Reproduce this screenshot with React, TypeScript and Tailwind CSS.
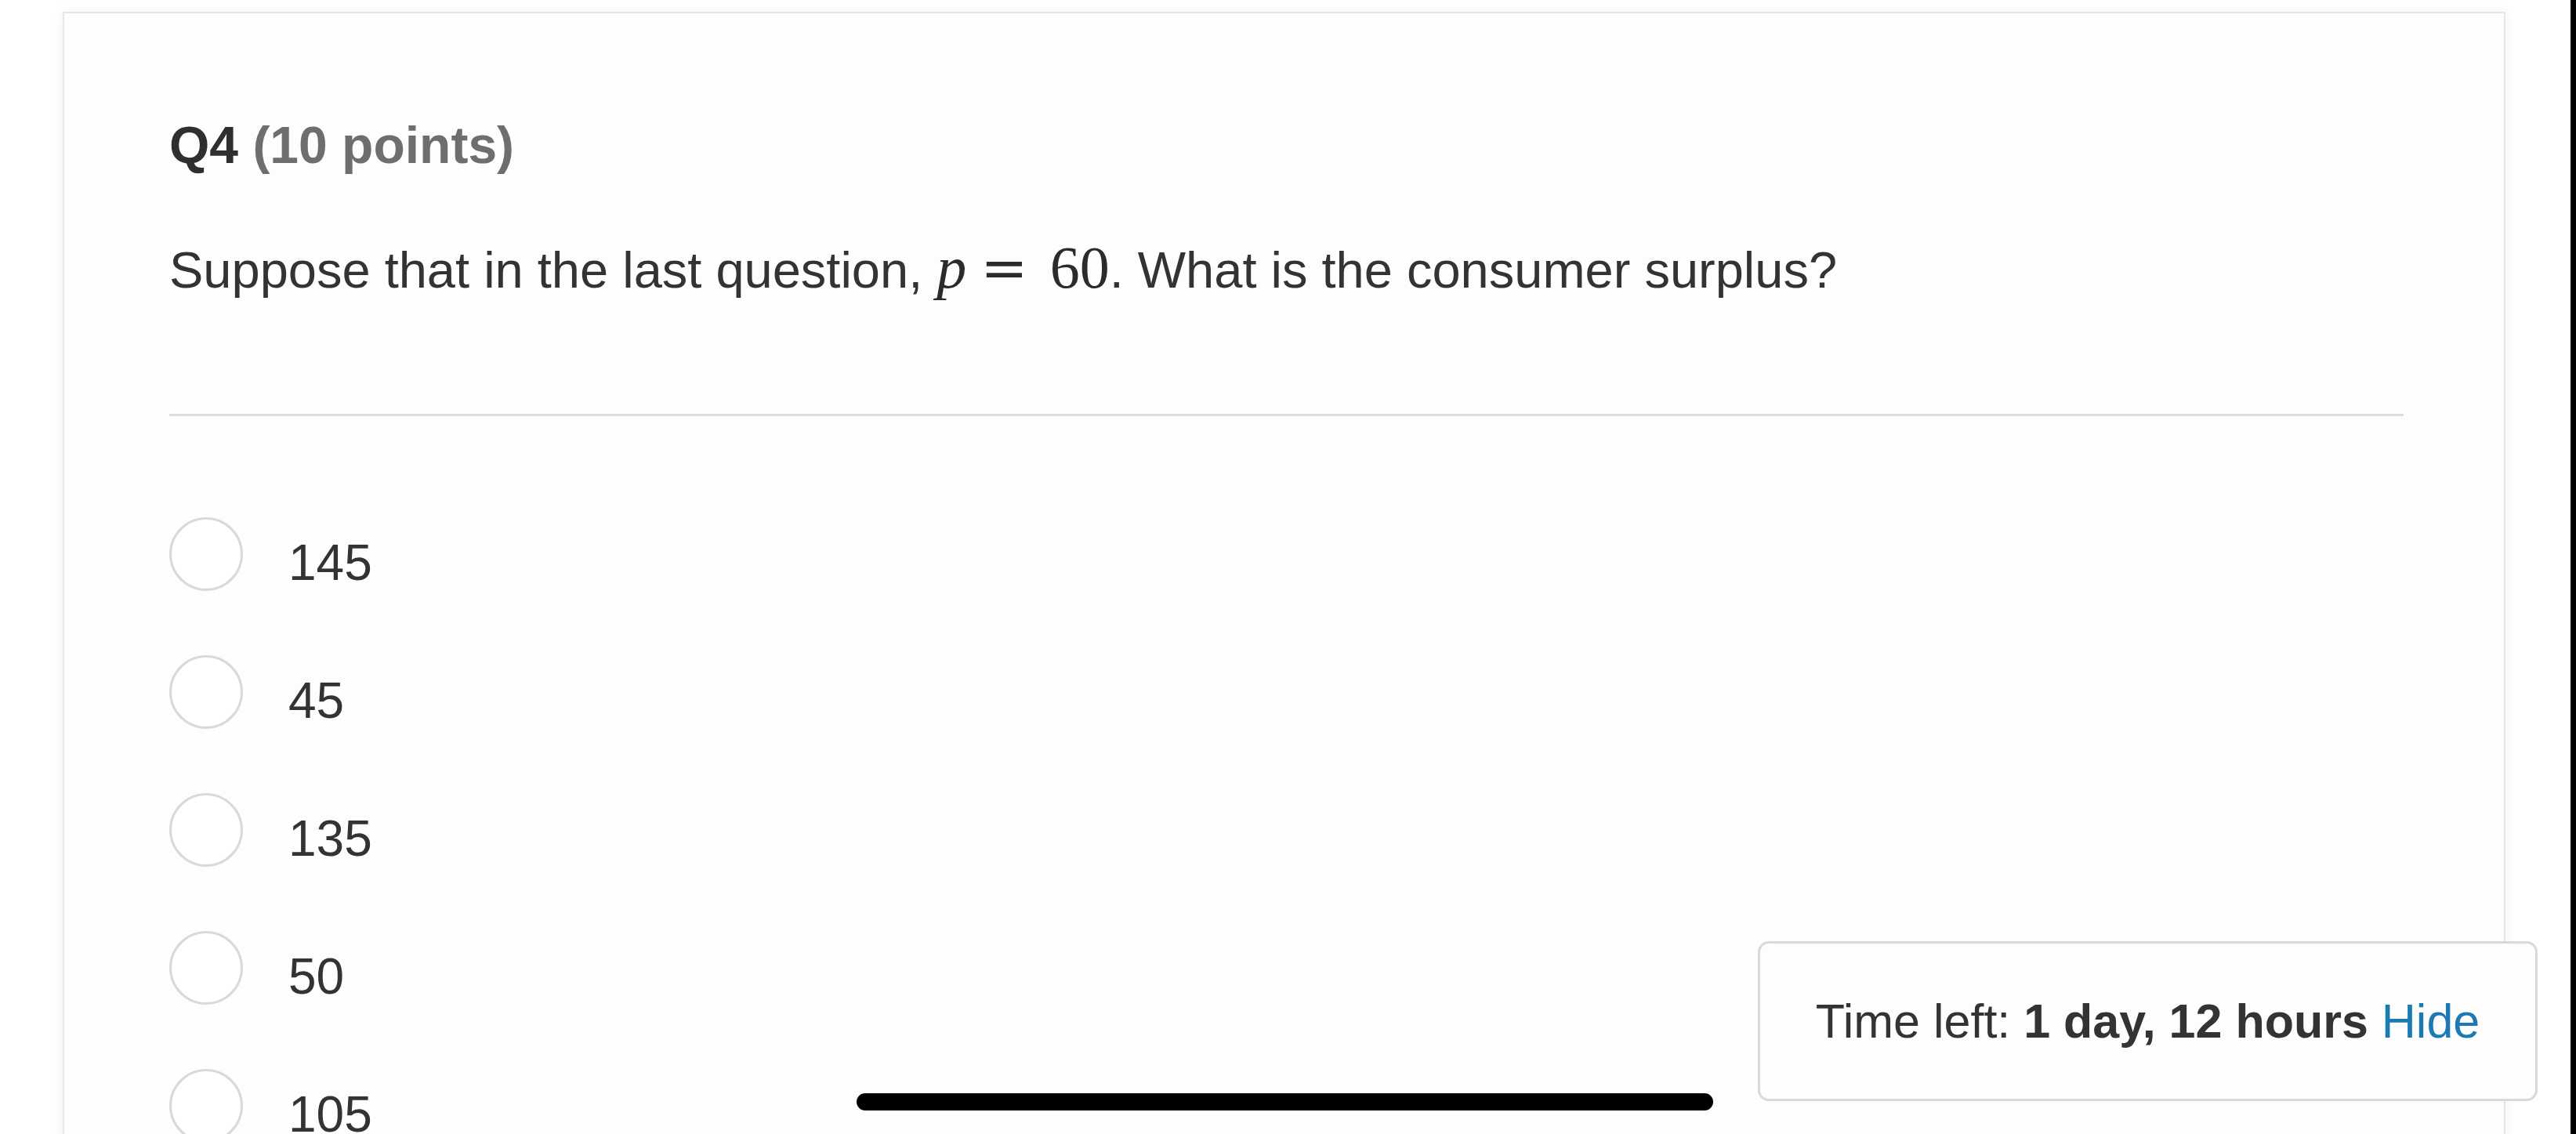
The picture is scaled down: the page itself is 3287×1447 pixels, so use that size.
import React from 'react';

// ── Data ─────────────────────────────────────────────────────────────────────

const options = ['145', '45', '135', '50', '105'];

const sans = { fontFamily: '"Liberation Sans", Arial, Helvetica, sans-serif' };

// ── Pieces ───────────────────────────────────────────────────────────────────

function MathInline() {
    // rendered like KaTeX: p = 60
    return (
        <span className="font-['Liberation_Serif',serif] text-[76px] leading-none text-[#2b2b2b]">
            <span className="italic mr-[2px]">p</span>
            <span className="ml-[16px] mr-[28px] font-['DejaVu_Serif',serif] text-[72px]">=</span>
            <span>60</span>
        </span>
    );
}

function RadioOption({ label }: { label: string }) {
    return (
        <label className="flex items-start gap-[58px] cursor-pointer">
            <span className="w-[94px] h-[94px] rounded-full border-[3px] border-[#d9d9d9] bg-white flex-shrink-0" />
            <span className="mt-[26px] text-[64px] leading-none text-[#333]">{label}</span>
        </label>
    );
}

function TimerBox() {
    return (
        <div className="absolute right-[42px] bottom-[42px] w-[995px] h-[204px] rounded-[14px] border-[3px] border-[#d9d9d9] bg-[#fdfdfd] flex items-center justify-center">
            <p className="text-[61px] leading-none text-[#333] whitespace-nowrap">
                Time left: <span className="font-bold">1 day, 12 hours</span>{' '}
                <a className="text-[#1c7ab3]">Hide</a>
            </p>
        </div>
    );
}

// ── Main ─────────────────────────────────────────────────────────────────────

export default function App() {
    return (
        <div className="w-[3287px] h-[1447px] overflow-hidden flex bg-white" style={sans}>
            <div className="relative flex-1 pt-[15px] pl-[80px] pr-[83px]">
                {/* Question card */}
                <div className="h-[1500px] border-2 border-[#e6e6e6] bg-[#fdfdfd] shadow-[0_0_14px_rgba(0,0,0,0.06)] pl-[134px] pr-[128px] pt-[135px]">
                    <h2 className="text-[66px] leading-none font-bold text-[#2f2f2f]">
                        Q4 <span className="text-[#6e6e6e]">(10 points)</span>
                    </h2>

                    <p className="mt-[85px] text-[65px] leading-[80px] text-[#333] whitespace-nowrap">
                        Suppose that in the last question, <MathInline />. What is the consumer surplus?
                    </p>

                    <div className="mt-[143px] h-[3px] bg-[#dedede]" />

                    <div className="mt-[129px] flex flex-col gap-[82px]">
                        {options.map(o => (
                            <RadioOption key={o} label={o} />
                        ))}
                    </div>
                </div>

                <TimerBox />

                {/* home indicator */}
                <div className="absolute left-[1093px] top-[1395px] w-[1093px] h-[22px] rounded-full bg-black" />
            </div>
            <div className="w-[7px] bg-black" />
        </div>
    );
}
